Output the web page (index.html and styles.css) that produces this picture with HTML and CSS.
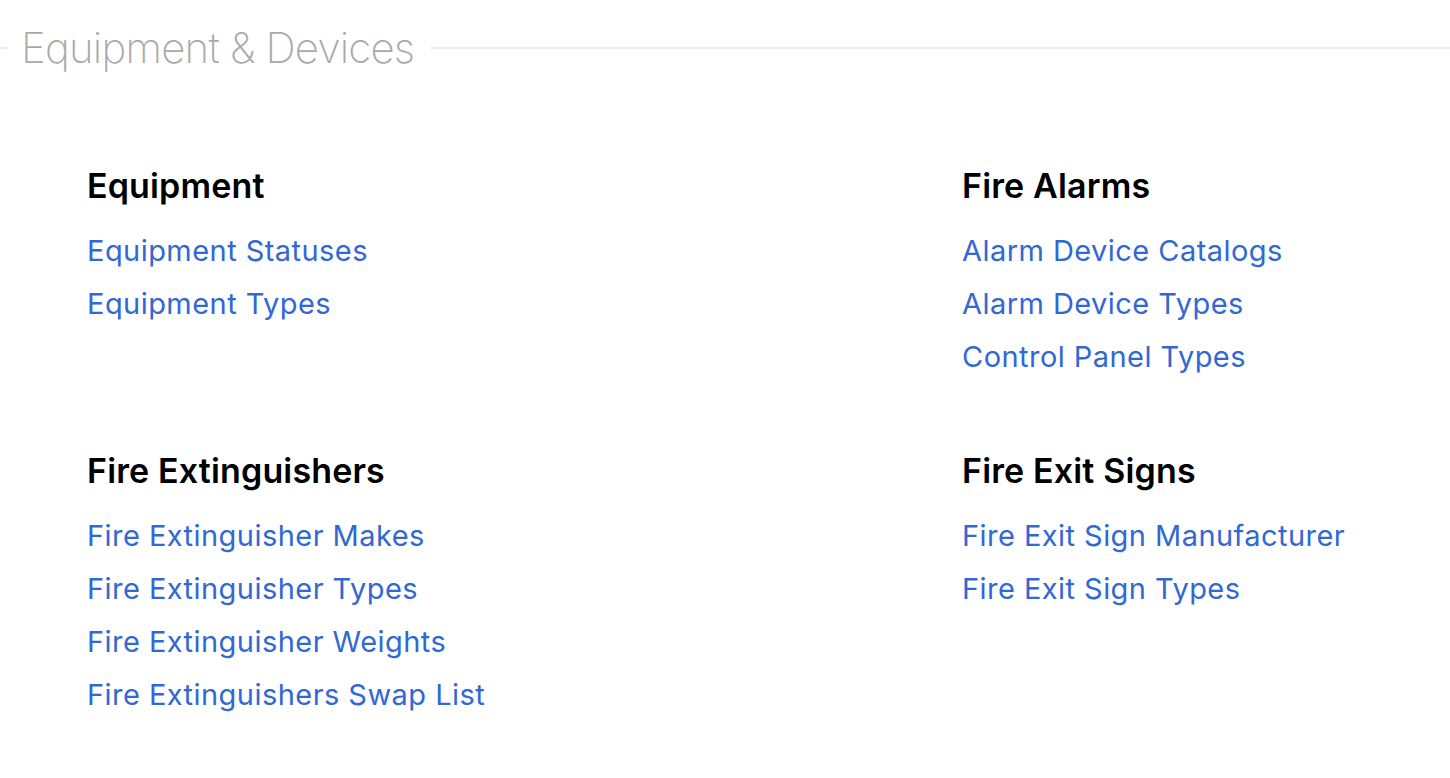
FILE: index.html
```html
<!DOCTYPE html>
<html lang="en">
<head>
<meta charset="utf-8">
<title>Equipment &amp; Devices</title>
<link rel="stylesheet" href="styles.css">
</head>
<body>
<section class="panel">
  <div class="legend">
    <span class="rule rule-left"></span>
    <h1 class="legend-title">Equipment &amp; Devices</h1>
    <span class="rule rule-right"></span>
  </div>
  <div class="groups">
    <div class="group">
      <h2 class="group-title">Equipment</h2>
      <ul class="links">
        <li><a href="#">Equipment Statuses</a></li>
        <li><a href="#">Equipment Types</a></li>
      </ul>
    </div>
    <div class="group">
      <h2 class="group-title">Fire Alarms</h2>
      <ul class="links">
        <li><a href="#">Alarm Device Catalogs</a></li>
        <li><a href="#">Alarm Device Types</a></li>
        <li><a href="#">Control Panel Types</a></li>
      </ul>
    </div>
    <div class="group">
      <h2 class="group-title">Fire Extinguishers</h2>
      <ul class="links">
        <li><a href="#">Fire Extinguisher Makes</a></li>
        <li><a href="#">Fire Extinguisher Types</a></li>
        <li><a href="#">Fire Extinguisher Weights</a></li>
        <li><a href="#">Fire Extinguishers Swap List</a></li>
      </ul>
    </div>
    <div class="group">
      <h2 class="group-title">Fire Exit Signs</h2>
      <ul class="links">
        <li><a href="#">Fire Exit Sign Manufacturer</a></li>
        <li><a href="#">Fire Exit Sign Types</a></li>
      </ul>
    </div>
  </div>
</section>
</body>
</html>
```

FILE: styles.css
```css
html, body {
  margin: 0;
  padding: 0;
  background: #ffffff;
}

body {
  font-family: Inter, "Liberation Sans", sans-serif;
}

.panel {
  padding-top: 24px;
}

.legend {
  display: flex;
  align-items: center;
  height: 48px;
}

.rule {
  height: 2px;
  background: #ececec;
}

.rule-left {
  width: 8px;
  flex: none;
}

.rule-right {
  flex: 1;
}

.legend-title {
  margin: 0 17px 0 13px;
  font-family: Inter, "Liberation Sans", sans-serif;
  font-weight: 200;
  font-size: 42px;
  line-height: 48px;
  color: #a9a9a9;
  letter-spacing: -0.8px;
}

.groups {
  display: grid;
  grid-template-columns: 875px 1fr;
  row-gap: 77px;
  padding: 94px 0 40px 87px;
}

.group-title {
  margin: 0;
  font-size: 34px;
  font-weight: 600;
  line-height: 40px;
  color: #000000;
  letter-spacing: 0.15px;
}

.links {
  list-style: none;
  margin: 28px 0 0;
  padding: 0;
  display: flex;
  flex-direction: column;
  gap: 19px;
}

.links li {
  line-height: 34px;
  font-size: 29px;
  letter-spacing: 0.45px;
}

.links a {
  color: #3168d3;
  text-decoration: none;
}
```
